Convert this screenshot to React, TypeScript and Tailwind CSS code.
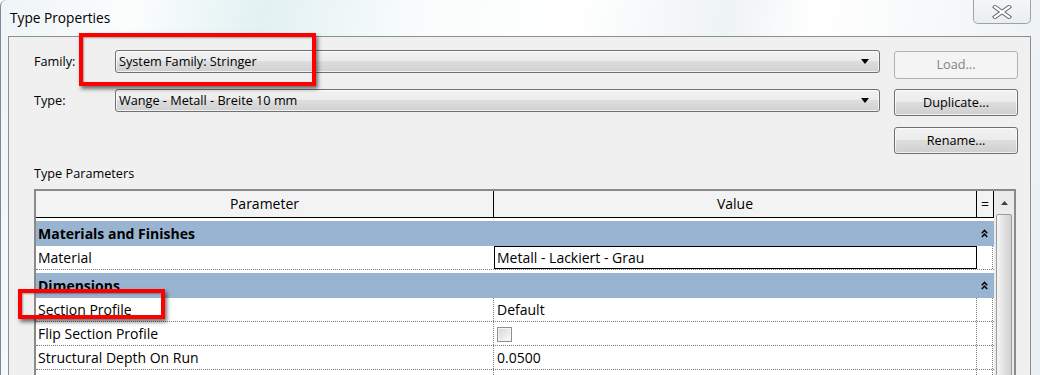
import React from "react";

function Chevrons() {
  return (
    <svg width="7" height="9" viewBox="0 0 7 9" className="block">
      <polyline points="0.8,4.2 3.5,1.4 6.2,4.2" fill="none" stroke="#000" strokeWidth="1.5" />
      <polyline points="0.8,8 3.5,5.2 6.2,8" fill="none" stroke="#000" strokeWidth="1.5" />
    </svg>
  );
}

function DropArrow() {
  return (
    <svg width="8" height="5" viewBox="0 0 8 5" className="block">
      <polygon points="0,0 8,0 4,5" fill="#000" />
    </svg>
  );
}

function Combo({ text }: { text: string }) {
  return (
    <div className="flex h-[23px] w-[765px] items-center justify-between rounded-[3px] border border-[#707070] bg-[linear-gradient(to_bottom,#f2f2f2_0%,#ebebeb_50%,#dddddd_50%,#d0d0d0_100%)] pl-[3px] pr-[10px] shadow-[inset_0_0_0_1px_rgba(255,255,255,0.7)]">
      <span className="leading-[21px]">{text}</span>
      <DropArrow />
    </div>
  );
}

function Btn({ label, disabled, h }: { label: string; disabled?: boolean; h: string }) {
  return (
    <div
      className={
        disabled
          ? `ml-[14px] flex ${h} w-[124px] items-center justify-center rounded-[3px] border border-[#adb2b5] bg-[#f4f4f4] text-[#838383]`
          : `ml-[14px] flex ${h} w-[124px] items-center justify-center rounded-[3px] border border-[#707070] bg-[linear-gradient(to_bottom,#f2f2f2_0%,#ebebeb_50%,#dddddd_50%,#cfcfcf_100%)] shadow-[inset_0_0_0_1px_rgba(255,255,255,0.7)]`
      }
    >
      {label}
    </div>
  );
}

function GroupRow({ title }: { title: string }) {
  return (
    <div className="bg-white pt-[3px]">
      <div className="flex h-[25px] items-center justify-between bg-[#99b4d1] pl-[2px] pr-[6px]">
        <span className="font-bold leading-[25px]">{title}</span>
        <Chevrons />
      </div>
    </div>
  );
}

function DataRow({ name, children }: { name: string; children?: React.ReactNode }) {
  return (
    <div className="flex h-[24px] border-b border-dotted border-[#7a7a7a] bg-white">
      <div className="w-[458px] border-r border-dotted border-[#7a7a7a] pl-[2px] leading-[23px]">{name}</div>
      <div className="flex w-[483px] items-center border-r border-dotted border-[#7a7a7a] pl-[3px]">{children}</div>
      <div className="w-[16px] border-r border-dotted border-[#7a7a7a]" />
    </div>
  );
}

export default function App() {
  return (
    <div className="relative h-[375px] w-[1040px] overflow-hidden rounded-tl-[6px] border-l border-[#7d8891] bg-[linear-gradient(100deg,#eef4f7_0%,#fbfdfd_12%,#e2f1f3_24%,#f9fcfc_38%,#ffffff_52%,#eef3f5_66%,#ffffff_74%,#f6f8f9_86%,#e9eff3_100%)] font-['Open_Sans',sans-serif] text-[12.7px] text-black">
      {/* title bar */}
      <div className="flex h-[36px] items-start justify-between">
        <div className="pl-[9px] pt-[8px] text-[13.7px] leading-[20px] [text-shadow:0_0_6px_#fff]">Type Properties</div>
        <div className="mr-[9px] flex h-[24px] w-[58px] items-center justify-center rounded-b-[5px] border border-t-0 border-[#9aa3ab] bg-[linear-gradient(to_bottom,#f4f6f8,#e9eef1)]">
          <svg width="22" height="14" viewBox="0 0 22 14">
            <g strokeLinecap="square">
              <line x1="4" y1="2" x2="18" y2="12" stroke="#6d6d6d" strokeWidth="4.2" />
              <line x1="18" y1="2" x2="4" y2="12" stroke="#6d6d6d" strokeWidth="4.2" />
              <line x1="4" y1="2" x2="18" y2="12" stroke="#fff" strokeWidth="2.2" />
              <line x1="18" y1="2" x2="4" y2="12" stroke="#fff" strokeWidth="2.2" />
            </g>
          </svg>
        </div>
      </div>

      {/* client area */}
      <div className="ml-[7px] mr-[9px] h-[339px] border border-b-0 border-[#8e8f8f] bg-[#f0f0f0] pl-[25px] pt-[13px]">
        <div className="flex h-[39px] items-start">
          <div className="w-[81px] leading-[23px]">Family:</div>
          <Combo text="System Family: Stringer" />
          <div className="mt-[1px]">
            <Btn label="Load..." disabled h="h-[28px]" />
          </div>
        </div>
        <div className="flex h-[38px] items-start">
          <div className="w-[81px] leading-[23px]">Type:</div>
          <Combo text="Wange - Metall - Breite 10 mm" />
          <Btn label="Duplicate..." h="h-[27px]" />
        </div>
        <div className="flex h-[36px] items-start">
          <div className="w-[846px]" />
          <Btn label="Rename..." h="h-[27px]" />
        </div>
        <div className="h-[20px] leading-[20px]">Type Parameters</div>

        {/* property grid */}
        <div className="mt-[6px] flex h-[200px] w-[982px] border-x-2 border-t-2 border-[#8a8a8a] text-[14px]">
          <div className="w-[958px] bg-white">
            <div className="flex h-[27px] border-b border-black bg-[#f3f3f3]">
              <div className="w-[458px] border-r border-black text-center leading-[26px]">Parameter</div>
              <div className="w-[483px] border-r border-black text-center leading-[26px]">Value</div>
              <div className="w-[17px] border-r border-black text-center leading-[26px]">=</div>
            </div>
            <GroupRow title="Materials and Finishes" />
            <div className="flex h-[24px] border-b border-dotted border-[#7a7a7a] bg-white">
              <div className="w-[458px] pl-[2px] leading-[23px]">Material</div>
              <div className="h-[23px] w-[483px] border border-black pl-[2px] leading-[21px]">Metall - Lackiert - Grau</div>
              <div className="w-[16px] border-r border-dotted border-[#7a7a7a]" />
            </div>
            <GroupRow title="Dimensions" />
            <DataRow name="Section Profile">
              <span className="leading-[23px]">Default</span>
            </DataRow>
            <DataRow name="Flip Section Profile">
              <div className="mt-[2px] h-[15px] w-[15px] border border-[#8f8f8f] bg-[linear-gradient(135deg,#d6d6d6,#fbfbfb)] shadow-[inset_0_0_0_1px_#f4f4f4]" />
            </DataRow>
            <DataRow name="Structural Depth On Run">
              <span className="leading-[23px]">0.0500</span>
            </DataRow>
            <DataRow name="" />
          </div>
          {/* scrollbar */}
          <div className="flex w-[20px] flex-col bg-[#ebebeb] pt-[1px]">
            <div className="flex h-[22px] items-center justify-center">
              <svg width="7" height="4" viewBox="0 0 7 4">
                <polygon points="0,4 7,4 3.5,0" fill="#404040" />
              </svg>
            </div>
            <div className="mx-[2px] flex-1 rounded-[2px] border border-[#9a9a9a] bg-[linear-gradient(to_right,#f6f6f6,#dedede_60%,#d2d2d2)]" />
          </div>
        </div>
      </div>

      {/* annotation boxes */}
      <div className="absolute left-[78px] top-[33px] h-[53px] w-[237px] border-4 border-[#ff0000] shadow-[2px_3px_4px_rgba(0,0,0,0.55),inset_1px_1px_2px_rgba(0,0,0,0.35)]" />
      <div className="absolute left-[17px] top-[289px] h-[30px] w-[147px] border-4 border-[#ff0000] shadow-[2px_3px_4px_rgba(0,0,0,0.55),inset_1px_1px_2px_rgba(0,0,0,0.35)]" />
    </div>
  );
}
